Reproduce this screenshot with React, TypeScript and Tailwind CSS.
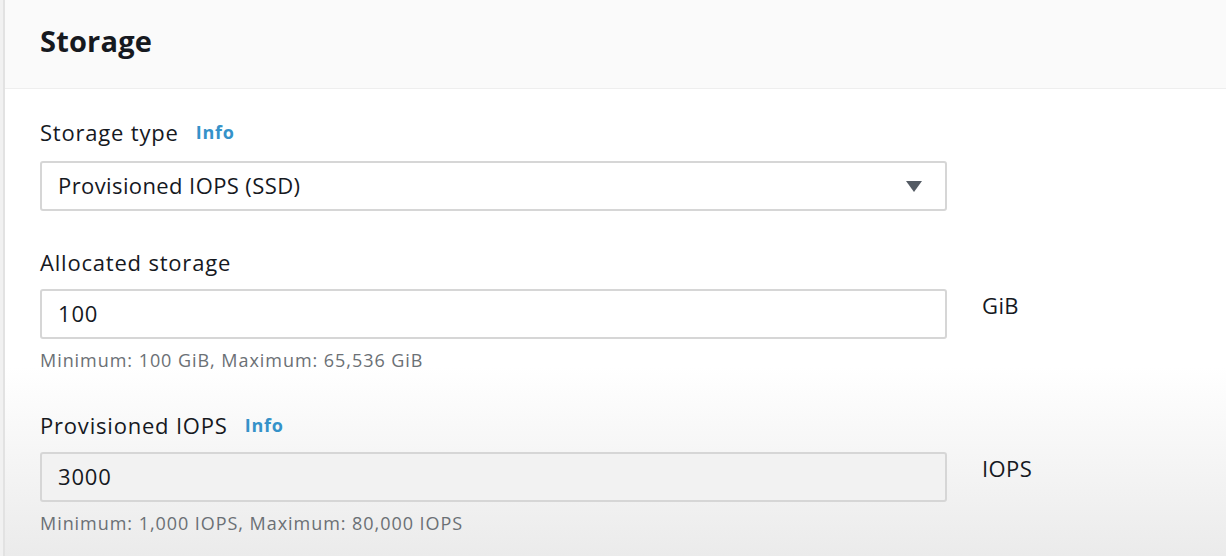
import React from "react";

const font = { fontFamily: '"Open Sans", "Noto Sans", Arial, sans-serif' };

function Label({ text, info }: { text: string; info?: boolean }) {
  return (
    <div className="flex items-center h-[28px] text-[22px] leading-[28px] tracking-[0.8px] text-[#16191f]">
      <span>{text}</span>
      {info && (
        <span className="ml-[17px] text-[18px] font-bold tracking-[0.8px] text-[#3592c9]">Info</span>
      )}
    </div>
  );
}

function Caret() {
  return (
    <svg width="18" height="13" viewBox="0 0 18 13" className="block">
      <path d="M1 1 L17 1 L9 12 Z" fill="#545b64" />
    </svg>
  );
}

export default function App() {
  return (
    <div className="w-[1226px] h-[556px] bg-[#f1f1f1] pl-[3px] overflow-hidden" style={font}>
      <div className="h-full border-l-2 border-[#e2e2e2] flex flex-col bg-[linear-gradient(to_bottom,#ffffff_0%,#ffffff_66%,#ebebeb_100%)]">
        <div className="h-[89px] shrink-0 bg-[#fafafa] border-b border-[#eeeeee] pl-[35px] flex items-center">
          <h2 className="text-[29px] font-bold text-[#16191f] leading-none -mt-[8px] tracking-[0.2px]">Storage</h2>
        </div>
        <div className="pl-[35px] pt-[29px]">
          <Label text="Storage type" info />
          <div className="mt-[15px] flex items-start">
            <div className="w-[907px] h-[50px] border-2 border-[#d6d6d6] rounded-[3px] bg-white flex items-center justify-between pl-[16px] pr-[22px]">
              <span className="text-[22px] tracking-[0.4px] text-[#16191f] -mt-[2px]">Provisioned IOPS (SSD)</span>
              <Caret />
            </div>
          </div>

          <div className="mt-[37px]">
            <Label text="Allocated storage" />
          </div>
          <div className="mt-[13px] flex items-start">
            <div className="w-[907px] h-[50px] border-2 border-[#d6d6d6] rounded-[3px] bg-white flex items-center pl-[16px]">
              <span className="text-[22px] tracking-[0.8px] text-[#16191f] -mt-[2px]">100</span>
            </div>
            <span className="ml-[35px] mt-[2px] text-[22px] leading-[28px] tracking-[0.4px] text-[#16191f]">GiB</span>
          </div>
          <div className="mt-[10px] text-[18px] leading-[22px] tracking-[0.95px] text-[#6b7075]">
            Minimum: 100 GiB, Maximum: 65,536 GiB
          </div>

          <div className="mt-[40px]">
            <Label text="Provisioned IOPS" info />
          </div>
          <div className="mt-[13px] flex items-start">
            <div className="w-[907px] h-[50px] border-2 border-[#d6d6d6] rounded-[3px] bg-[#f2f2f2] flex items-center pl-[16px]">
              <span className="text-[22px] tracking-[0.8px] text-[#16191f] -mt-[2px]">3000</span>
            </div>
            <span className="ml-[35px] mt-[2px] text-[22px] leading-[28px] tracking-[0.4px] text-[#16191f]">IOPS</span>
          </div>
          <div className="mt-[10px] text-[18px] leading-[22px] tracking-[0.95px] text-[#6b7075]">
            Minimum: 1,000 IOPS, Maximum: 80,000 IOPS
          </div>
        </div>
      </div>
    </div>
  );
}
